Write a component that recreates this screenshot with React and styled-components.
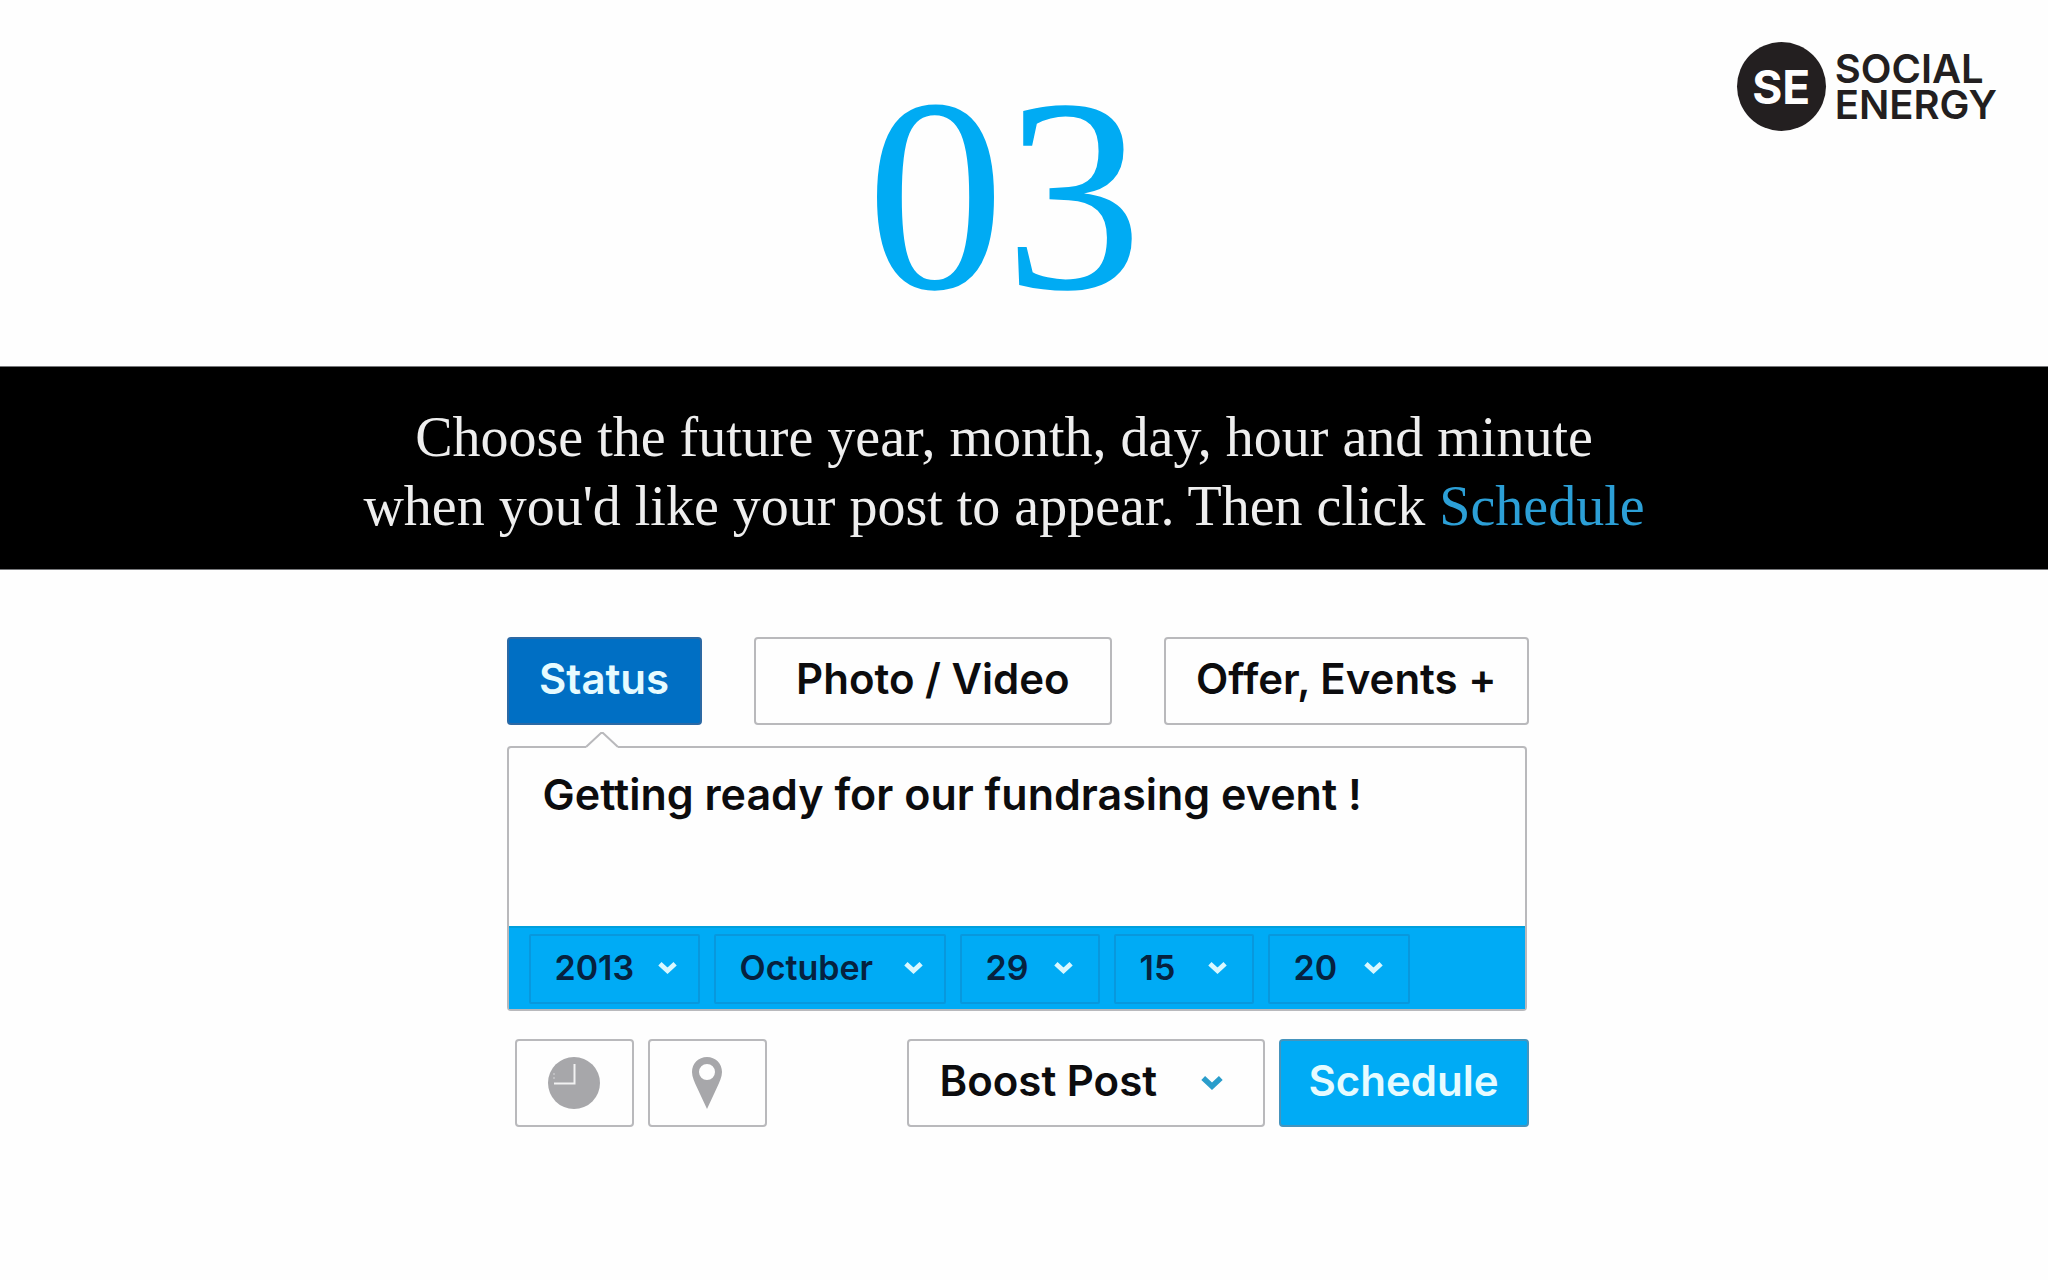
import styled, { createGlobalStyle } from "styled-components";

const GlobalStyle = createGlobalStyle`
  * {
    box-sizing: border-box;
  }
  body {
    margin: 0;
    background-color: #fefefe;
    color: #0c0c0e;
    font-family: Inter, "Liberation Sans", sans-serif;
  }
  button, select, textarea {
    font-family: inherit;
    color: inherit;
    margin: 0;
  }
`;

const Header = styled.header`
  display: grid;
  grid-template-columns: 1fr auto 1fr;
  align-items: start;
  min-height: 366px;
  padding: 42px 51px 0 12px;
`;

const StepNumber = styled.h1`
  grid-column: 2;
  margin: 15px 0 0;
  font: 400 276px/276px "Liberation Serif", serif;
  color: #00abf3;
`;

const Logo = styled.div`
  justify-self: end;
  display: flex;
  align-items: center;
  gap: 9px;
  color: #231f20;
`;

const LogoBadge = styled.span`
  display: flex;
  align-items: center;
  justify-content: center;
  width: 89px;
  height: 89px;
  border-radius: 50%;
  background-color: #231f20;
  color: #fefefe;
  font-size: 46px;
  font-weight: 700;
`;

const LogoName = styled.span`
  font-size: 40px;
  line-height: 36px;
  font-weight: 600;
`;

const Banner = styled.section`
  padding: 36px 40px 28px 0;
  border-top: 1px solid #77787b;
  border-bottom: 1px solid #77787b;
  background-color: #000;
  color: #eeeeee;
  text-align: center;
`;

const Instructions = styled.p`
  margin: 0;
  font: 400 56px/69px "Liberation Serif", serif;
`;

const Accent = styled.span`
  color: #2c9fd6;
`;

const Main = styled.main`
  display: flex;
  justify-content: center;
  padding: 67px 13px 60px 0;
`;

const Composer = styled.form`
  width: 100%;
  max-width: 1022px;
`;

const Tabs = styled.div`
  display: grid;
  grid-template-columns: 195fr 358fr 364fr;
  gap: 52px;
`;

const Button = styled.button`
  display: flex;
  align-items: center;
  justify-content: center;
  width: ${({ $width }) => $width || "auto"};
  height: 88px;
  padding: 0 0 6px;
  border: 2px solid #b9b9bc;
  border-radius: 4px;
  background-color: transparent;
  font-size: 42px;
  font-weight: 600;
  white-space: nowrap;

  &.isActive {
    border-color: #2c69a4;
    background-color: #006fc4;
    color: #e6fbff;
  }
  &.isPrimary {
    border-color: #4594bd;
    background-color: #00abf5;
    color: #e6fbff;
  }
  &.isIcon {
    padding: 0;
  }
`;

const Panel = styled.div`
  position: relative;
  margin: 21px 2px 0 0;
  border: 2px solid #b9b9bc;
  border-radius: 4px;
`;

const Pointer = styled.svg`
  position: absolute;
  top: -17px;
  left: 76px;
`;

const Message = styled.textarea`
  display: block;
  width: 100%;
  height: 178px;
  padding: 21px 34px;
  border: 0;
  outline: 0;
  resize: none;
  background-color: transparent;
  font-size: 43px;
  line-height: 50px;
  font-weight: 600;
`;

const DateBar = styled.div`
  display: flex;
  gap: 14px;
  padding: 6px 20px 5px;
  border-top: 2px solid #009fdc;
  background-color: #00abf5;
`;

const SelectWrap = styled.div`
  position: relative;
  width: ${({ $width }) => $width};
`;

const Select = styled.select`
  appearance: none;
  display: block;
  width: 100%;
  height: 70px;
  padding: 0 0 4px 24px;
  border: 2px solid #0898dd;
  border-radius: 2px;
  background-color: transparent;
  color: #06223f;
  font-size: 34px;
  font-weight: 600;

  &.isLarge {
    height: 88px;
    padding: 0 0 6px 31px;
    border-color: #b9b9bc;
    border-radius: 4px;
    color: #0c0c0e;
    font-size: 42px;
  }
`;

const Chevron = styled.svg`
  position: absolute;
  top: 50%;
  right: ${({ $right }) => $right};
  margin-top: -8px;
  fill: none;
  stroke: ${({ $color }) => $color};
  stroke-width: 5;
  pointer-events: none;
`;

const Actions = styled.div`
  display: flex;
  gap: 14px;
  margin: 28px 0 0 8px;
`;

const Spacer = styled.div`
  flex: 1;
`;

const dateFields = [
  { label: "Year", value: "2013", width: "171px", inset: "23px" },
  { label: "Month", value: "Octuber", width: "232px", inset: "23px" },
  { label: "Day", value: "29", width: "140px", inset: "27px" },
  { label: "Hour", value: "15", width: "140px", inset: "27px" },
  { label: "Minute", value: "20", width: "142px", inset: "27px" },
];

function Dropdown({ label, value, width, inset, large }) {
  return (
    <SelectWrap $width={width}>
      <Select
        aria-label={label}
        defaultValue={value}
        className={large ? "isLarge" : ""}
      >
        <option>{value}</option>
      </Select>
      <Chevron
        $right={inset}
        $color={large ? "#2a9dcb" : "#d8f8ff"}
        width={large ? 22 : 19}
        height={large ? 16 : 14}
        viewBox="0 0 20 14"
      >
        <path d="M2 2.5 L10 10 L18 2.5" />
      </Chevron>
    </SelectWrap>
  );
}

function ClockIcon() {
  return (
    <svg width="52" height="52" viewBox="0 0 52 52">
      <circle cx="26" cy="26" r="26" fill="#a7a7aa" />
      <path d="M26.5 7V26.5H6" fill="none" stroke="#f2f2f2" strokeWidth="2" />
      <path d="M6 16V24" stroke="#d5d5d7" strokeWidth="1" strokeDasharray="2 2" />
    </svg>
  );
}

function PinIcon() {
  return (
    <svg width="30" height="52" viewBox="0 0 30 52">
      <path
        fill="#a7a7aa"
        fillRule="evenodd"
        d="M15 0C6.5 0 0 6.5 0 15c0 5 2.5 10 5 15.500L15 52l10-21.500C27.500 25 30 20 30 15 30 6.500 23.500 0 15 0Zm0 7a8 8 0 1 1 0 16 8 8 0 0 1 0-16Z"
      />
    </svg>
  );
}

export default function App() {
  return (
    <>
      <GlobalStyle />
      <Header>
        <StepNumber>03</StepNumber>
        <Logo>
          <LogoBadge>SE</LogoBadge>
          <LogoName>
            SOCIAL
            <br />
            ENERGY
          </LogoName>
        </Logo>
      </Header>
      <Banner>
        <Instructions>
          Choose the future year, month, day, hour and minute
          <br />
          when you'd like your post to appear. Then click{" "}
          <Accent>Schedule</Accent>
        </Instructions>
      </Banner>
      <Main>
        <Composer onSubmit={(e) => e.preventDefault()}>
          <Tabs>
            <Button type="button" className="isActive">
              Status
            </Button>
            <Button type="button">Photo / Video</Button>
            <Button type="button">Offer, Events +</Button>
          </Tabs>
          <Panel>
            <Pointer width="34" height="18" viewBox="0 0 34 18">
              <path d="M1 16L15.5 2h3L33 16V18H1Z" fill="#fefefe" />
              <path
                d="M1 16L16 2h2L33 16"
                fill="none"
                stroke="#b9b9bc"
                strokeWidth="2"
              />
            </Pointer>
            <Message
              aria-label="Status message"
              spellCheck={false}
              defaultValue="Getting ready for our fundrasing event !"
            />
            <DateBar>
              {dateFields.map((field) => (
                <Dropdown key={field.label} {...field} />
              ))}
            </DateBar>
          </Panel>
          <Actions>
            <Button
              type="button"
              $width="119px"
              className="isIcon"
              aria-label="Set time"
            >
              <ClockIcon />
            </Button>
            <Button
              type="button"
              $width="119px"
              className="isIcon"
              aria-label="Add location"
            >
              <PinIcon />
            </Button>
            <Spacer />
            <Dropdown
              label="Boost"
              value="Boost Post"
              width="358px"
              inset="42px"
              large
            />
            <Button type="submit" $width="250px" className="isPrimary">
              Schedule
            </Button>
          </Actions>
        </Composer>
      </Main>
    </>
  );
}
